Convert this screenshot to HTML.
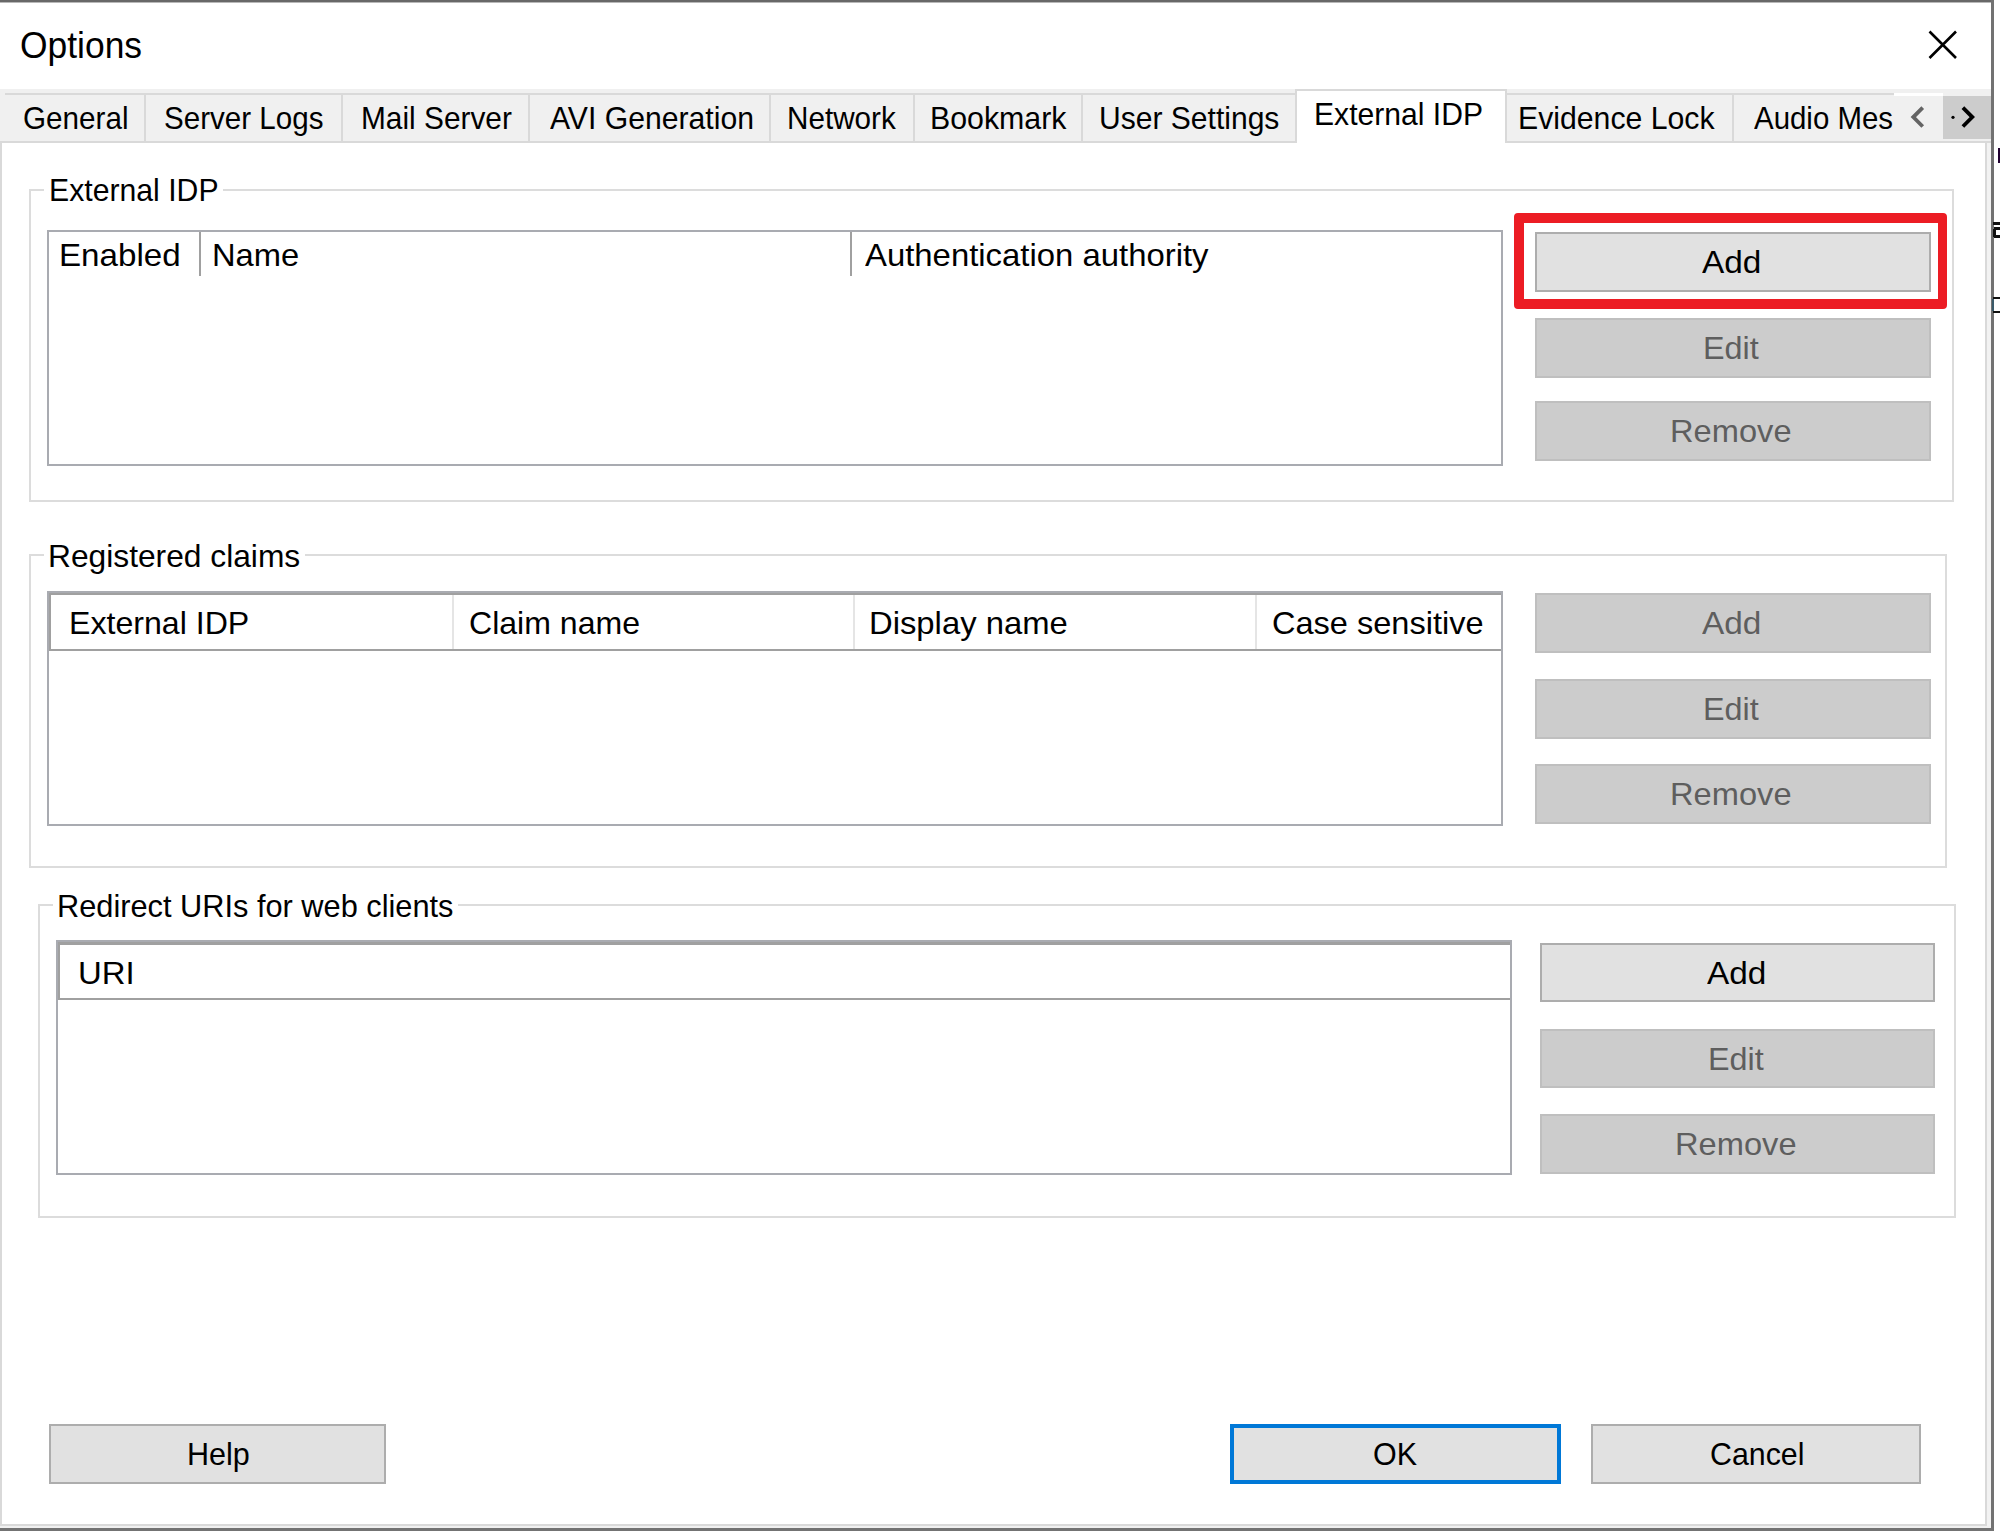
<!DOCTYPE html>
<html><head><meta charset="utf-8"><title>Options</title>
<style>
html,body{margin:0;padding:0;background:#fff;}
body{width:2000px;height:1535px;position:relative;overflow:hidden;font-family:"Liberation Sans",sans-serif;}
body>div{position:absolute;}
.t{position:absolute;line-height:0;white-space:nowrap;transform-origin:0 0;}
</style></head><body>
<div style="left:0px;top:0px;width:1994px;height:2px;background:#686868"></div>
<div style="left:0px;top:2px;width:1991px;height:1px;background:#b8b8b8"></div>
<div style="left:1991px;top:0px;width:3px;height:1531px;background:#727272"></div>
<div style="left:0px;top:1528px;width:1994px;height:3px;background:#737373"></div>
<svg style="position:absolute;left:1925px;top:27px" width="36" height="36" viewBox="0 0 36 36"><path d="M4.5 4.5 L31 31 M31 4.5 L4.5 31" stroke="#000" stroke-width="2.6" fill="none"/></svg>
<div style="left:0px;top:89px;width:1991px;height:54px;background:#f0f0f0"></div>
<div style="left:5px;top:93px;width:1889px;height:2px;background:#d9d9d9"></div>
<div style="left:1894px;top:93px;width:49px;height:3px;background:#fff"></div>
<div style="left:0px;top:141px;width:1991px;height:2px;background:#d9d9d9"></div>
<div style="left:144px;top:93px;width:2px;height:50px;background:#d9d9d9"></div>
<div style="left:341px;top:93px;width:2px;height:50px;background:#d9d9d9"></div>
<div style="left:528px;top:93px;width:2px;height:50px;background:#d9d9d9"></div>
<div style="left:769px;top:93px;width:2px;height:50px;background:#d9d9d9"></div>
<div style="left:913px;top:93px;width:2px;height:50px;background:#d9d9d9"></div>
<div style="left:1081px;top:93px;width:2px;height:50px;background:#d9d9d9"></div>
<div style="left:1732px;top:93px;width:2px;height:50px;background:#d9d9d9"></div>
<div style="left:1295px;top:89px;width:212px;height:56px;background:#fff;border:2px solid #d9d9d9;border-bottom:none;box-sizing:border-box"></div>
<div style="left:1943px;top:96px;width:48px;height:43px;background:#cccccc"></div>
<svg style="position:absolute;left:1905px;top:102px" width="24" height="30" viewBox="0 0 24 30"><path d="M17.7 5.7 L8.3 15.1 L17.7 24.5" stroke="#646464" stroke-width="3.8" fill="none" stroke-linecap="butt" stroke-linejoin="miter"/></svg>
<svg style="position:absolute;left:1945px;top:102px" width="40" height="30" viewBox="0 0 40 30"><path d="M17.9 5.7 L27.3 15.1 L17.9 24.5" stroke="#000" stroke-width="3.8" fill="none" stroke-linecap="butt" stroke-linejoin="miter"/><circle cx="8" cy="15.3" r="1.6" fill="#000"/></svg>
<div style="left:0px;top:143px;width:1987px;height:1383px;background:#fff;border:2px solid #d9d9d9;border-top:none;box-sizing:border-box"></div>
<div style="left:1987px;top:143px;width:4px;height:1385px;background:#f2f2f2"></div>
<div style="left:0px;top:1526px;width:1991px;height:2px;background:#f0f0f0"></div>
<div style="left:1297px;top:141px;width:208px;height:4px;background:#fff"></div>
<div style="left:29px;top:189px;width:1925px;height:313px;border:2px solid #dcdcdc;box-sizing:border-box"></div>
<div style="left:44px;top:188px;width:179px;height:4px;background:#fff"></div>
<div style="left:29px;top:554px;width:1918px;height:314px;border:2px solid #dcdcdc;box-sizing:border-box"></div>
<div style="left:44px;top:553px;width:261px;height:4px;background:#fff"></div>
<div style="left:38px;top:904px;width:1918px;height:314px;border:2px solid #dcdcdc;box-sizing:border-box"></div>
<div style="left:53px;top:903px;width:405px;height:4px;background:#fff"></div>
<div style="left:47px;top:230px;width:1456px;height:236px;background:#fff;border:2px solid #a9abb1;box-sizing:border-box"></div>
<div style="left:199px;top:232px;width:2px;height:44px;background:#a0a0a0"></div>
<div style="left:850px;top:232px;width:2px;height:44px;background:#a0a0a0"></div>
<div style="left:47px;top:591px;width:1456px;height:235px;background:#fff;border:2px solid #a9abb1;box-sizing:border-box"></div>
<div style="left:49px;top:593px;width:1452px;height:58px;border:2px solid #a0a0a0;border-right:none;box-sizing:border-box"></div>
<div style="left:452px;top:595px;width:2px;height:54px;background:#e5e5e5"></div>
<div style="left:853px;top:595px;width:2px;height:54px;background:#e5e5e5"></div>
<div style="left:1255px;top:595px;width:2px;height:54px;background:#e5e5e5"></div>
<div style="left:56px;top:940px;width:1456px;height:235px;background:#fff;border:2px solid #a9abb1;box-sizing:border-box"></div>
<div style="left:58px;top:942px;width:1452px;height:58px;border:2px solid #a0a0a0;border-top-width:3px;border-right:none;box-sizing:border-box"></div>
<div style="left:1535px;top:232px;width:396px;height:60px;background:#e1e1e1;border:2px solid #adadad;box-sizing:border-box"></div>
<div style="left:1535px;top:318px;width:396px;height:60px;background:#cccccc;border:2px solid #bfbfbf;box-sizing:border-box"></div>
<div style="left:1535px;top:401px;width:396px;height:60px;background:#cccccc;border:2px solid #bfbfbf;box-sizing:border-box"></div>
<div style="left:1535px;top:593px;width:396px;height:60px;background:#cccccc;border:2px solid #bfbfbf;box-sizing:border-box"></div>
<div style="left:1535px;top:679px;width:396px;height:60px;background:#cccccc;border:2px solid #bfbfbf;box-sizing:border-box"></div>
<div style="left:1535px;top:764px;width:396px;height:60px;background:#cccccc;border:2px solid #bfbfbf;box-sizing:border-box"></div>
<div style="left:1540px;top:943px;width:395px;height:59px;background:#e1e1e1;border:2px solid #adadad;box-sizing:border-box"></div>
<div style="left:1540px;top:1029px;width:395px;height:59px;background:#cccccc;border:2px solid #bfbfbf;box-sizing:border-box"></div>
<div style="left:1540px;top:1114px;width:395px;height:60px;background:#cccccc;border:2px solid #bfbfbf;box-sizing:border-box"></div>
<div style="left:49px;top:1424px;width:337px;height:60px;background:#e1e1e1;border:2px solid #adadad;box-sizing:border-box"></div>
<div style="left:1230px;top:1424px;width:331px;height:60px;background:#e1e1e1;border:4px solid #0078d7;box-sizing:border-box"></div>
<div style="left:1591px;top:1424px;width:330px;height:60px;background:#e1e1e1;border:2px solid #adadad;box-sizing:border-box"></div>
<div style="left:1514px;top:213px;width:433px;height:96px;border:solid #ec1c24;border-width:10px 9px 10px 10px;border-radius:4px;box-sizing:border-box"></div>
<div style="left:1998px;top:148px;width:2px;height:15px;background:#200030"></div>
<div style="left:1993px;top:222px;width:7px;height:3px;background:#111"></div>
<div style="left:1994px;top:227px;width:6px;height:3px;background:#111"></div>
<div style="left:1993px;top:229px;width:3px;height:8px;background:#111"></div>
<div style="left:1994px;top:235px;width:6px;height:3px;background:#111"></div>
<div style="left:1993px;top:297px;width:7px;height:2px;background:#111"></div>
<div style="left:1993px;top:311px;width:7px;height:2px;background:#111"></div>
<div style="left:1992px;top:299px;width:2px;height:12px;background:#3a5a6a"></div>
<span class="t" style="left:20.23px;top:46.00px;font-size:36px;color:#000;transform:scaleX(0.9838)">Options</span>
<span class="t" style="left:23.02px;top:118.00px;font-size:32px;color:#000;transform:scaleX(0.9266)">General</span>
<span class="t" style="left:164.02px;top:118.00px;font-size:32px;color:#000;transform:scaleX(0.9240)">Server Logs</span>
<span class="t" style="left:361.11px;top:118.00px;font-size:32px;color:#000;transform:scaleX(0.9325)">Mail Server</span>
<span class="t" style="left:549.50px;top:118.00px;font-size:32px;color:#000;transform:scaleX(0.9422)">AVI Generation</span>
<span class="t" style="left:787.13px;top:118.00px;font-size:32px;color:#000;transform:scaleX(0.9271)">Network</span>
<span class="t" style="left:930.07px;top:118.00px;font-size:32px;color:#000;transform:scaleX(0.9474)">Bookmark</span>
<span class="t" style="left:1099.10px;top:118.00px;font-size:32px;color:#000;transform:scaleX(0.9391)">User Settings</span>
<span class="t" style="left:1314.09px;top:114.00px;font-size:32px;color:#000;transform:scaleX(0.9409)">External IDP</span>
<span class="t" style="left:1518.08px;top:118.00px;font-size:32px;color:#000;transform:scaleX(0.9443)">Evidence Lock</span>
<span class="t" style="left:1753.50px;top:118.00px;font-size:32px;color:#000;transform:scaleX(0.9195)">Audio Mes</span>
<span class="t" style="left:48.58px;top:190.00px;font-size:32px;color:#000;transform:scaleX(0.9438)">External IDP</span>
<span class="t" style="left:48.46px;top:556.00px;font-size:32px;color:#000;transform:scaleX(0.9918)">Registered claims</span>
<span class="t" style="left:56.54px;top:905.50px;font-size:32px;color:#000;transform:scaleX(0.9610)">Redirect URIs for web clients</span>
<span class="t" style="left:59.35px;top:255.00px;font-size:32px;color:#000;transform:scaleX(1.0358)">Enabled</span>
<span class="t" style="left:212.39px;top:255.00px;font-size:32px;color:#000;transform:scaleX(1.0212)">Name</span>
<span class="t" style="left:864.50px;top:255.00px;font-size:32px;color:#000;transform:scaleX(1.0272)">Authentication authority</span>
<span class="t" style="left:68.93px;top:623.00px;font-size:32px;color:#000;transform:scaleX(1.0036)">External IDP</span>
<span class="t" style="left:468.90px;top:623.00px;font-size:32px;color:#000;transform:scaleX(1.0019)">Claim name</span>
<span class="t" style="left:869.38px;top:623.00px;font-size:32px;color:#000;transform:scaleX(1.0250)">Display name</span>
<span class="t" style="left:1272.37px;top:623.00px;font-size:32px;color:#000;transform:scaleX(1.0165)">Case sensitive</span>
<span class="t" style="left:77.87px;top:973.00px;font-size:32px;color:#000;transform:scaleX(1.0282)">URI</span>
<span class="t" style="left:1702.00px;top:261.50px;font-size:32px;color:#000;transform:scaleX(1.0417)">Add</span>
<span class="t" style="left:1703.41px;top:348.00px;font-size:32px;color:#5e5e5e;transform:scaleX(1.0099)">Edit</span>
<span class="t" style="left:1670.39px;top:431.00px;font-size:32px;color:#5e5e5e;transform:scaleX(1.0200)">Remove</span>
<span class="t" style="left:1702.00px;top:623.00px;font-size:32px;color:#5e5e5e;transform:scaleX(1.0417)">Add</span>
<span class="t" style="left:1703.41px;top:709.00px;font-size:32px;color:#5e5e5e;transform:scaleX(1.0099)">Edit</span>
<span class="t" style="left:1670.39px;top:794.00px;font-size:32px;color:#5e5e5e;transform:scaleX(1.0200)">Remove</span>
<span class="t" style="left:1706.50px;top:973.00px;font-size:32px;color:#000;transform:scaleX(1.0417)">Add</span>
<span class="t" style="left:1708.41px;top:1058.50px;font-size:32px;color:#5e5e5e;transform:scaleX(1.0099)">Edit</span>
<span class="t" style="left:1675.39px;top:1143.50px;font-size:32px;color:#5e5e5e;transform:scaleX(1.0200)">Remove</span>
<span class="t" style="left:187.05px;top:1454.00px;font-size:32px;color:#000;transform:scaleX(0.9553)">Help</span>
<span class="t" style="left:1372.98px;top:1454.00px;font-size:32px;color:#000;transform:scaleX(0.9511)">OK</span>
<span class="t" style="left:1710.48px;top:1454.00px;font-size:32px;color:#000;transform:scaleX(0.9479)">Cancel</span>
</body></html>
